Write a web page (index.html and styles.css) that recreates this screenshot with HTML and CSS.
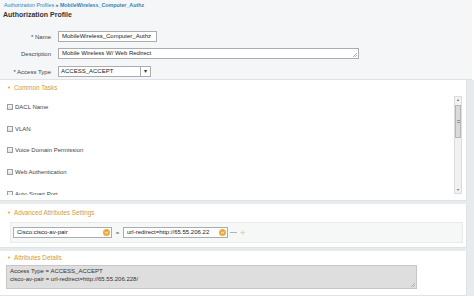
FILE: index.html
```html
<!DOCTYPE html>
<html>
  <head>
    <title>Authorization Profile</title>
    <link rel="stylesheet" href="styles.css">
  </head>
  <body>
    <div class="top"> <!-- Breadcrumb, title and profile fields -->
      <div class="crumbs"><span class="link">Authorization Profiles</span> &raquo; <b class="link">MobileWireless_Computer_Authz</b></div>
      <h1>Authorization Profile</h1>
      <div class="form">
        <div class="form-row">
          <label>* Name</label>
          <div class="field name-field">MobileWireless_Computer_Authz</div>
        </div>
        <div class="form-row">
          <label>Description</label>
          <div class="field desc-field">Mobile Wireless W/ Web Redirect<span class="grip"></span></div>
        </div>
        <div class="form-row">
          <label>* Access Type</label>
          <div class="field select-field"><span class="select-text">ACCESS_ACCEPT</span><span class="select-btn">&#9662;</span></div>
        </div>
      </div>
    </div>

    <div class="panels">
      <div class="panel tasks">
        <div class="panel-head"><span class="arrow">&#9660;</span>Common Tasks</div>
        <div class="scroll-area">
          <div class="task-list">
            <div class="task"><span class="check"></span>DACL Name</div>
            <div class="task"><span class="check"></span>VLAN</div>
            <div class="task"><span class="check"></span>Voice Domain Permission</div>
            <div class="task"><span class="check"></span>Web Authentication</div>
            <div class="task"><span class="check"></span>Auto Smart Port</div>
          </div>
          <div class="scrollbar">
            <span class="sb-arrow">&#9652;</span>
            <span class="sb-thumb"><span class="sb-grip"></span></span>
            <span class="sb-track"></span>
            <span class="sb-arrow">&#9662;</span>
          </div>
        </div>
      </div>

      <div class="panel advanced">
        <div class="panel-head"><span class="arrow">&#9660;</span>Advanced Attributes Settings</div>
        <div class="attr-box">
          <div class="field attr-name">Cisco:cisco-av-pair<span class="pick"><svg viewBox="0 0 8 8" width="7" height="7"><circle cx="4" cy="4" r="4" fill="#f0aa3c"/><path d="M2.2 3.2 L4 5 L5.8 3.2" stroke="#fff" stroke-width="1.1" fill="none"/></svg></span></div>
          <span class="equals">=</span>
          <div class="field attr-value">url-redirect=http://65.55.206.22<span class="pick"><svg viewBox="0 0 8 8" width="7" height="7"><circle cx="4" cy="4" r="4" fill="#f0aa3c"/><path d="M2.2 3.2 L4 5 L5.8 3.2" stroke="#fff" stroke-width="1.1" fill="none"/></svg></span></div>
          <span class="minus"></span>
          <span class="plus">+</span>
        </div>
      </div>

      <div class="panel details">
        <div class="panel-head"><span class="arrow">&#9660;</span>Attributes Details</div>
        <div class="details-box">
          <div>Access Type = ACCESS_ACCEPT</div>
          <div>cisco-av-pair = url-redirect=http://65.55.206.228/</div>
          <span class="grip"></span>
        </div>
      </div>
    </div>
  </body>
</html>
```

FILE: styles.css
```css
/* Authorization profile page */
body {
  margin: 0;
  padding: 0;
  width: 474px;
  height: 297px;
  overflow: hidden;
  font-family: "Liberation Sans", Arial, sans-serif;
  font-size: 6px;
  color: #333; /* Dark grey */
  background-color: #fff;
}

.top {
  width: 472px;
  height: 80px;
  padding-top: 2px;
  box-sizing: border-box;
  background-color: #f4f6f8; /* Pale blue grey */
  border-bottom: 1px solid #dde3e7;
}

.crumbs {
  padding-left: 4px;
  font-size: 5.3px;
  line-height: 7px;
}

.link {
  color: #2f86b8; /* Link blue */
}

h1 {
  margin: 0;
  padding-left: 3px;
  font-size: 7px;
  line-height: 12px;
  color: #333;
}

.form {
  display: flex;
  flex-direction: column;
  gap: 6px;
  margin-top: 10px;
}

.form-row {
  display: flex;
  align-items: center;
}

.form-row:last-child {
  margin-top: 1px;
}

label {
  width: 51px;
  margin-right: 7px;
  text-align: right;
  color: #444;
}

.field {
  position: relative;
  height: 11px;
  box-sizing: border-box;
  border: 1px solid #a9adb0;
  background-color: #fff;
  padding-left: 3px;
  line-height: 9px;
  white-space: nowrap;
  overflow: hidden;
  color: #222;
}

.name-field {
  width: 99px;
}

.desc-field {
  width: 301px;
}

.grip {
  position: absolute;
  right: 1px;
  bottom: 1px;
  width: 4px;
  height: 4px;
  background: linear-gradient(135deg, transparent 45%, #b5b5b5 45%, #b5b5b5 58%, transparent 58%, transparent 72%, #b5b5b5 72%, #b5b5b5 85%, transparent 85%);
}

.select-field {
  display: flex;
  width: 93px;
  padding-left: 2px;
}

.select-text {
  flex: 1;
}

.select-btn {
  width: 9px;
  border-left: 1px solid #a9adb0;
  text-align: center;
  font-size: 6px;
  color: #333;
}

/* Grey area that holds the collapsible panels */
.panels {
  display: flex;
  flex-direction: column;
  gap: 3px;
  height: 216px;
  background-color: #e7ebee;
}

.panel {
  width: 467px;
  box-sizing: border-box;
  background-color: #fff;
  border-right: 1px solid #dde3e7;
  border-bottom: 1px solid #dde3e7;
}

.panel-head {
  height: 16px;
  padding-left: 7px;
  line-height: 16px;
  font-size: 6.3px;
  color: #d19b3b; /* Gold */
}

.arrow {
  display: inline-block;
  width: 7px;
  font-size: 4px;
  vertical-align: top;
}

.tasks {
  height: 121px;
}

.scroll-area {
  display: flex;
  height: 99px;
  overflow: hidden;
}

.task-list {
  flex: 1;
}

.task {
  display: flex;
  align-items: center;
  height: 21.75px;
  flex-shrink: 0;
  padding-left: 7px;
  color: #444;
}

.check {
  width: 6px;
  height: 6px;
  margin-right: 2px;
  box-sizing: border-box;
  border: 1px solid #9a9ea2;
  background: linear-gradient(#f8f8f8, #e2e2e2);
}

.scrollbar {
  display: flex;
  flex-direction: column;
  width: 8px;
  height: 98px;
  margin-right: 4px;
  box-sizing: border-box;
  border: 1px solid #dcdcdc;
  background-color: #f1f1f1;
}

.sb-arrow {
  height: 6px;
  font-size: 4px;
  line-height: 6px;
  text-align: center;
  color: #666;
}

.sb-thumb {
  display: flex;
  align-items: center;
  justify-content: center;
  height: 31px;
  margin-top: 2px;
  border: 1px solid #b7b7b7;
  background-color: #dadada;
}

.sb-grip {
  width: 3px;
  height: 4px;
  background: repeating-linear-gradient(#999 0 1px, transparent 1px 2px);
}

.sb-track {
  flex: 1;
}

.advanced {
  height: 44px;
}

.advanced .panel-head {
  height: 18px;
  line-height: 17px;
}

.attr-box {
  display: flex;
  align-items: center;
  width: 453px;
  height: 21px;
  margin-left: 10px;
  box-sizing: border-box;
  padding-left: 2px;
  border: 1px solid #e8ebec;
  background-color: #f6f7f7;
}

.pick {
  position: absolute;
  right: 1px;
  top: 1px;
  line-height: 0;
}

.attr-name {
  width: 99px;
}

.equals {
  width: 11px;
  text-align: center;
  color: #555;
}

.attr-value {
  width: 105px;
}

.minus {
  width: 7px;
  height: 1px;
  margin-left: 2px;
  background-color: #b3b3b3;
}

.plus {
  margin-left: 3px;
  font-size: 9px;
  font-weight: bold;
  color: #d3d7c6;
}

.details {
  height: 45px;
}

.details .panel-head {
  height: 14px;
  line-height: 14px;
}

.details-box {
  position: relative;
  width: 411px;
  height: 24px;
  margin-left: 6px;
  box-sizing: border-box;
  padding: 1px 0 0 3px;
  border: 1px solid #c6c6c6;
  background-color: #dedede;
  line-height: 8px;
  color: #333;
}
```
